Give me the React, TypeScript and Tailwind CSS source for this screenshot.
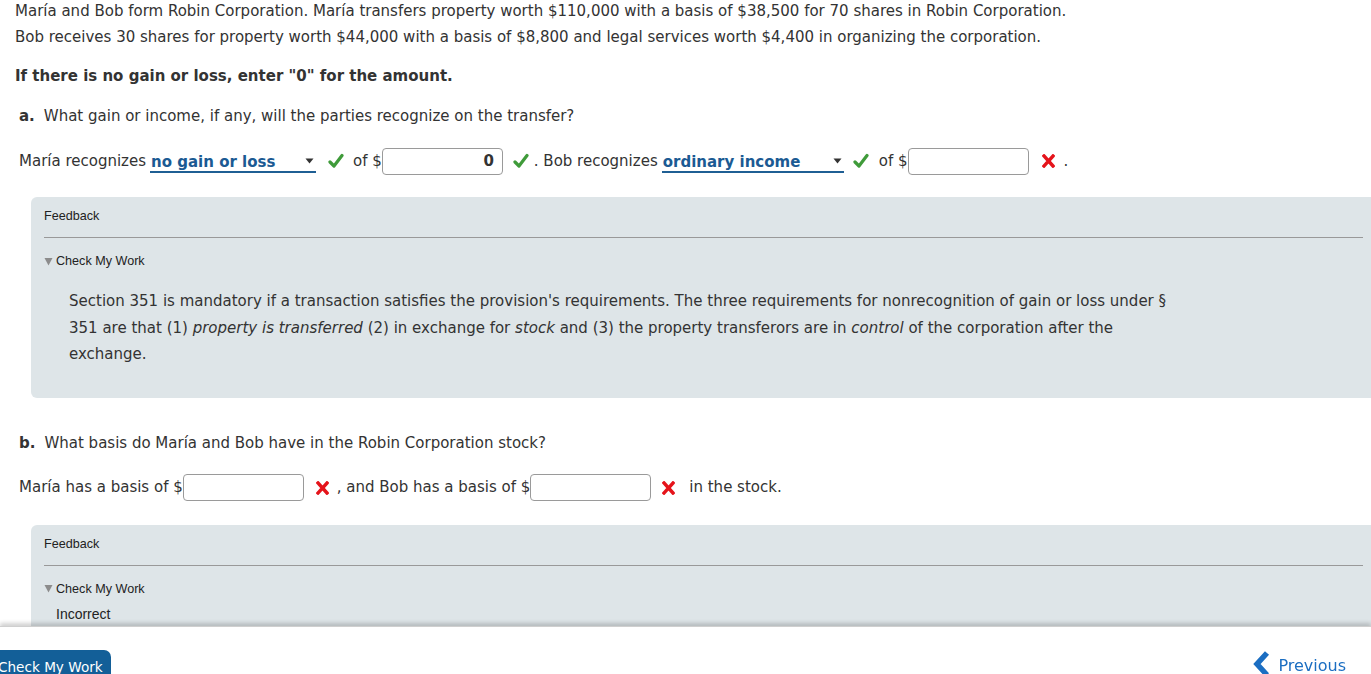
import React from "react";

function Check() {
  return (
    <svg width="16" height="16" viewBox="0 0 16 16" className="shrink-0">
      <path d="M2 9 L6 13 L14 2.5" fill="none" stroke="#3f9b3a" strokeWidth="3.2" strokeLinecap="round" strokeLinejoin="round" />
    </svg>
  );
}

function Cross() {
  return (
    <svg width="13" height="14" viewBox="0 0 13 14" className="shrink-0">
      <path d="M2 2 L11 12 M11 2 L2 12" fill="none" stroke="#e5141b" strokeWidth="3.4" strokeLinecap="square" />
    </svg>
  );
}

function Select({ text, w }: { text: string; w: string }) {
  return (
    <div className={`relative h-[21px] mt-[2px] border-b-[2px] border-[#1f5f94] flex items-end ${w}`}>
      <span className="font-bold text-[#1b5a93] text-[15px] leading-[18px] pl-[1px]">{text}</span>
      <svg width="9" height="6" viewBox="0 0 9 6" className="absolute right-[2px] top-[6px]">
        <path d="M0.5 0.5 L8.5 0.5 L4.5 5.5 Z" fill="#333" />
      </svg>
    </div>
  );
}

function Input({ value }: { value?: string }) {
  return (
    <div className="w-[121px] h-[27px] border border-[#9a9a9a] rounded-[4px] bg-white flex items-center justify-end pr-[8px] shrink-0">
      <span className="font-bold text-[15px] text-[#333]">{value}</span>
    </div>
  );
}

function FeedbackHead() {
  return (
    <>
      <div className="font-['Liberation_Sans',Arial,sans-serif] text-[12.6px] leading-[18px] text-[#222] pl-[13px]">Feedback</div>
      <div className="mt-[12px] ml-[13px] mr-[13px] h-px bg-[#999]" />
      <div className="mt-[14px] ml-[13px] flex items-center font-['Liberation_Sans',Arial,sans-serif] text-[12.6px] leading-[18px] text-[#222]">
        <svg width="9" height="9" viewBox="0 0 9 9" className="mr-[3px]">
          <path d="M0.5 1 L8.5 1 L4.5 8.5 Z" fill="#8c8c8c" />
        </svg>
        <span>Check My Work</span>
      </div>
    </>
  );
}

export default function App() {
  return (
    <div className="relative w-full h-[674px] overflow-hidden bg-white text-[#333] font-['DejaVu_Sans',Verdana,sans-serif] text-[15px]">
      <div className="pl-[15px]">
        <p className="-mt-[2px] leading-[26px] whitespace-nowrap">
          María and Bob form Robin Corporation. María transfers property worth $110,000 with a basis of $38,500 for 70 shares in Robin Corporation.
          <br />
          Bob receives 30 shares for property worth $44,000 with a basis of $8,800 and legal services worth $4,400 in organizing the corporation.
        </p>
        <p className="mt-[13px] leading-[26px] font-bold">If there is no gain or loss, enter "0" for the amount.</p>
        <p className="mt-[14px] leading-[26px] pl-[4px]">
          <span className="font-bold">a.</span>
          <span className="ml-[9px]">What gain or income, if any, will the parties recognize on the transfer?</span>
        </p>

        <div className="mt-[18px] h-[28px] flex items-center pl-[4px] whitespace-nowrap">
          <span>María recognizes</span>
          <div className="ml-[4px]"><Select text="no gain or loss" w="w-[166px]" /></div>
          <div className="ml-[12px]"><Check /></div>
          <span className="ml-[9px]">of $</span>
          <Input value="0" />
          <div className="ml-[10px]"><Check /></div>
          <span className="ml-[5px]">. Bob recognizes</span>
          <div className="ml-[4px]"><Select text="ordinary income" w="w-[182px]" /></div>
          <div className="ml-[9px]"><Check /></div>
          <span className="ml-[10px]">of $</span>
          <Input />
          <div className="ml-[13px]"><Cross /></div>
          <span className="ml-[9px]">.</span>
        </div>

        <div className="mt-[22px] ml-[16px] w-[1345px] bg-[#dee5e8] rounded-tl-[6px] rounded-bl-[6px] pt-[10px] pb-[30px]">
          <FeedbackHead />
          <p className="mt-[18px] pl-[38px] leading-[26.5px] whitespace-nowrap">
            Section 351 is mandatory if a transaction satisfies the provision's requirements. The three requirements for nonrecognition of gain or loss under §
            <br />
            351 are that (1) <em>property is transferred</em> (2) in exchange for <em>stock</em> and (3) the property transferors are in <em>control</em> of the corporation after the
            <br />
            exchange.
          </p>
        </div>

        <p className="mt-[32px] leading-[26px] pl-[4px]">
          <span className="font-bold">b.</span>
          <span className="ml-[9px]">What basis do María and Bob have in the Robin Corporation stock?</span>
        </p>

        <div className="mt-[18px] h-[28px] flex items-center pl-[4px] whitespace-nowrap">
          <span>María has a basis of $</span>
          <Input />
          <div className="ml-[12px]"><Cross /></div>
          <span className="ml-[8px]">, and Bob has a basis of $</span>
          <Input />
          <div className="ml-[11px]"><Cross /></div>
          <span className="ml-[14px]">in the stock.</span>
        </div>

        <div className="mt-[23px] ml-[16px] w-[1345px] h-[200px] bg-[#dee5e8] rounded-tl-[6px] pt-[10px]">
          <FeedbackHead />
          <div className="mt-[7px] pl-[25px] font-['Liberation_Sans',Arial,sans-serif] text-[14px] leading-[18px] text-[#222]">Incorrect</div>
        </div>
      </div>

      <div className="fixed left-0 right-0 bottom-0 h-[48px] bg-white shadow-[0_-3px_4px_rgba(0,0,0,0.18)] border-t border-[#cfcfcf] flex items-start justify-between">
        <div className="mt-[23px] -ml-[12px] h-[40px] bg-[#135f98] rounded-tr-[7px] pl-[10px] pr-[8px] pt-[7px] text-white text-[13.6px] leading-[20px] font-['DejaVu_Sans',Verdana,sans-serif]">
          Check My Work
        </div>
        <div className="mt-[24px] mr-[25px] flex items-start">
          <svg width="20" height="26" viewBox="0 0 20 26" className="mr-[6px]">
            <path d="M15 2 L5 13 L15 24" fill="none" stroke="#1b6ec2" strokeWidth="5.5" strokeLinejoin="miter" />
          </svg>
          <span className="mt-[5px] text-[#1b6ec2] text-[16px] leading-[20px] font-['DejaVu_Sans',Verdana,sans-serif]">Previous</span>
        </div>
      </div>
    </div>
  );
}
